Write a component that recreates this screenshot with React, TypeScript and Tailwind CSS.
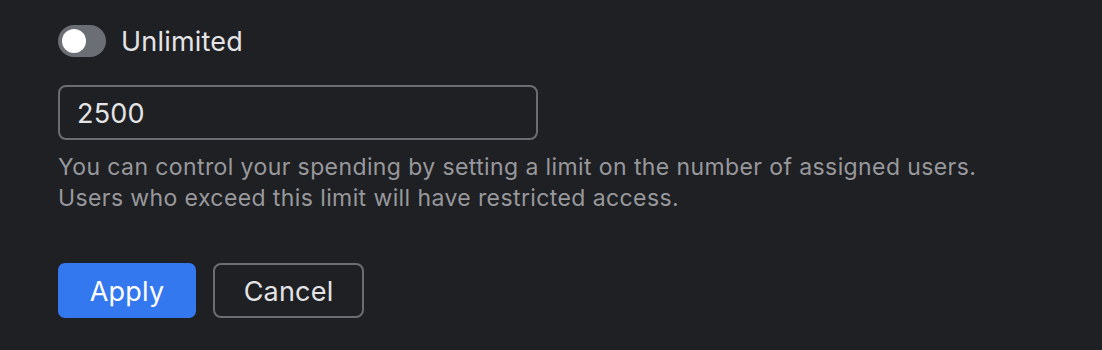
import { useState } from "react";

function Toggle({ on, onChange }: { on: boolean; onChange: (v: boolean) => void }) {
  return (
    <button
      type="button"
      onClick={() => onChange(!on)}
      className={`relative flex h-[32px] w-[48px] shrink-0 items-center rounded-full px-[4px] ${
        on ? "bg-[#3478f6]" : "bg-[#6b6e74]"
      }`}
    >
      <span
        className={`block h-[24px] w-[24px] rounded-full bg-white transition-transform ${
          on ? "translate-x-[16px]" : "translate-x-0"
        }`}
      />
    </button>
  );
}

export default function App() {
  const [unlimited, setUnlimited] = useState(false);
  const [limit, setLimit] = useState("2500");

  return (
    <div
      className="min-h-[350px] w-full bg-[#1f2023] pl-[58px] pt-[25px] text-[#e4e4e7]"
      style={{ fontFamily: "Inter, 'Noto Sans', sans-serif" }}
    >
      {/* Interruptor */}
      <div className="flex h-[32px] items-center gap-[15px]">
        <Toggle on={unlimited} onChange={setUnlimited} />
        <span className="pt-[2px] text-[27px] leading-[32px] tracking-[0.2px]">Unlimited</span>
      </div>

      {/* Campo de limite */}
      <input
        value={limit}
        onChange={(e) => setLimit(e.target.value)}
        className="mt-[28px] block h-[55px] w-[480px] rounded-[8px] border-2 border-[#6b6d72] bg-transparent px-[17px] pt-[1px] text-[27px] tracking-[0.2px] text-[#e4e4e7] outline-none"
      />
      <p className="mt-[12px] text-[23px] leading-[31px] tracking-[0.4px] text-[#98989d]">
        You can control your spending by setting a limit on the number of assigned users.
        <br />
        Users who exceed this limit will have restricted access.
      </p>

      {/* Botões */}
      <div className="mt-[49px] flex gap-[17px]">
        <button className="flex h-[55px] w-[138px] items-center justify-center rounded-[7px] bg-[#3478f0] pt-[3px] text-[27px] tracking-[0.2px] text-white">
          Apply
        </button>
        <button className="flex h-[55px] w-[151px] items-center justify-center rounded-[8px] border-2 border-[#6b6d72] pt-[3px] text-[27px] tracking-[0.2px] text-[#e4e4e7]">
          Cancel
        </button>
      </div>
    </div>
  );
}
